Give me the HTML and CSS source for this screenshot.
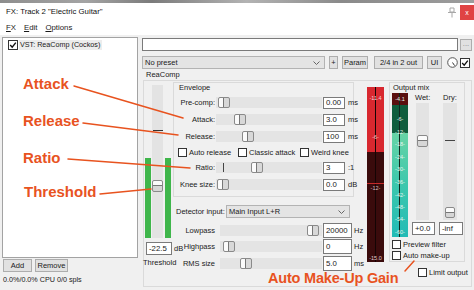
FILE: index.html
```html
<!DOCTYPE html>
<html>
<head>
<meta charset="utf-8">
<title>FX: Track 2</title>
<link rel="stylesheet" href="styles.css">
</head>
<body>
<div class="strip"></div>
<div class="titlebar">
  <span class="title">FX: Track 2 "Electric Guitar"</span>
  <svg class="pin" width="10" height="11" viewBox="0 0 10 11"><path d="M3 1h4v4H3z" fill="none" stroke="#a8a8a8"/><path d="M1 5.5h8M5 5.5v5" stroke="#a8a8a8"/></svg>
  <span class="close">x</span>
</div>
<div class="menubar"><span><u>F</u>X</span><span><u>E</u>dit</span><span><u>O</u>ptions</span></div>
<div class="main">
  <div class="left">
    <div class="list">
      <div class="item">
        <svg width="10" height="10" viewBox="0 0 10 10"><rect x="0.5" y="0.5" width="9" height="9" fill="#fff" stroke="#333"/><path d="M2.2 5 L4.2 7.2 L7.8 2.6" fill="none" stroke="#111" stroke-width="1.4"/></svg>
        <span class="itemtext">VST: ReaComp (Cockos)</span>
      </div>
    </div>
    <div class="btns"><span class="btn add">Add</span><span class="btn remove">Remove</span></div>
    <div class="cpu">0.0%/0.0% CPU 0/0 spls</div>
  </div>
  <div class="right">
    <div class="row1"><div class="field"></div><div class="btn dots">...</div></div>
    <div class="row2">
      <div class="dd preset"><span>No preset</span><svg width="7" height="4" viewBox="0 0 7 4"><path d="M0.5 0.5 L3.5 3.5 L6.5 0.5" fill="none" stroke="#666"/></svg></div>
      <span class="btn plus">+</span>
      <span class="btn param">Param</span>
      <span class="btn io">2/4 in 2 out</span>
      <span class="btn uib">UI</span>
      <svg class="knob" width="11" height="11" viewBox="0 0 11 11"><circle cx="5.5" cy="5.5" r="4.8" fill="#fff" stroke="#555"/><path d="M5.5 5.5 L7.6 8.6" stroke="#333"/></svg>
      <svg class="topcb" width="10" height="10" viewBox="0 0 10 10"><rect x="0.5" y="0.5" width="9" height="9" fill="#fff" stroke="#333"/><path d="M2.2 5 L4.2 7.2 L7.8 2.6" fill="none" stroke="#111" stroke-width="1.3"/></svg>
    </div>
    <div class="plugname">ReaComp</div>
    <div class="panel">
      <div class="thresh">
        <div class="vs">
          <span class="gbar"></span>
          <div class="vtrack thr"><span class="tick thr-tick"></span><span class="vthumb thr-thumb"></span></div>
          <span class="gbar gbar-r"></span>
        </div>
        <div class="tval"><span class="val tv">-22.5</span><span class="unit">dB</span></div>
        <div class="tlabel">Threshold</div>
      </div>
      <div class="mid">
        <div class="env">
          <div class="env-title">Envelope</div>
          <div class="srow"><span class="lbl">Pre-comp:</span><div class="htrack"><span class="hthumb p-pre"></span></div><span class="val">0.00</span><span class="unit">ms</span></div>
          <div class="srow"><span class="lbl">Attack:</span><div class="htrack"><span class="hthumb p-att"></span></div><span class="val">3.0</span><span class="unit">ms</span></div>
          <div class="srow"><span class="lbl">Release:</span><div class="htrack"><span class="hthumb p-rel"></span></div><span class="val">100</span><span class="unit">ms</span></div>
          <div class="cbrow">
            <span class="cbi w1"><span class="cb"></span>Auto release</span>
            <span class="cbi w2"><span class="cb"></span>Classic attack</span>
            <span class="cbi"><span class="cb"></span>Weird knee</span>
          </div>
          <div class="srow"><span class="lbl">Ratio:</span><div class="htrack"><span class="rtick"></span><span class="hthumb p-rat"></span></div><span class="val">3</span><span class="unit">:1</span></div>
          <div class="srow"><span class="lbl">Knee size:</span><div class="htrack"><span class="hthumb p-knee"></span></div><span class="val">0.0</span><span class="unit">dB</span></div>
        </div>
        <div class="det"><span class="lbl2">Detector input:</span><div class="dd detdd"><span>Main Input L+R</span><svg width="7" height="4" viewBox="0 0 7 4"><path d="M0.5 0.5 L3.5 3.5 L6.5 0.5" fill="none" stroke="#666"/></svg></div></div>
        <div class="frow first"><span class="lbl">Lowpass</span><div class="htrack"><span class="hthumb p-lp"></span></div><span class="val">20000</span><span class="unit">Hz</span></div>
        <div class="frow"><span class="lbl">Highpass</span><div class="htrack"><span class="hthumb p-hp"></span></div><span class="val">0</span><span class="unit">Hz</span></div>
        <div class="frow rms"><span class="lbl">RMS size</span><div class="htrack"><span class="hthumb p-rms"></span></div><span class="val">5.0</span><span class="unit">ms</span></div>
      </div>
      <div class="meter-in">
        <div class="mi-red"></div>
        <div class="mi-dark"></div>
        <span class="vline"></span>
        <span class="thr-line"></span>
        <span class="ml mi-l1">-11.4</span>
        <span class="ml mi-l2">-6-</span>
        <span class="ml mi-l3">-12-</span>
        <span class="ml mi-l4">-15.0</span>
      </div>
      <div class="outcol">
        <div class="outgrp">
          <div class="outlbl">Output mix</div>
          <div class="outbody">
            <div class="mo">
              <div class="mo-peak"></div>
              <div class="mo-dg"></div>
              <div class="mo-teal"></div>
              <span class="vline mo-line"></span>
              <span class="ml o0">-4.1</span>
              <span class="ml o1">-6-</span>
              <span class="ml o2">-12-</span>
              <span class="ml o3">-18-</span>
              <span class="ml o4">-24-</span>
              <span class="ml o5">-30-</span>
              <span class="ml o6">-36-</span>
              <span class="ml o7">-42-</span>
              <span class="ml o8">-48-</span>
              <span class="ml o9">-54-</span>
              <span class="ml o10">-60-</span>
            </div>
            <div class="wd wet">
              <span class="wl">Wet:</span>
              <div class="vtrack wtrack"><span class="vthumb wet-thumb"></span></div>
              <span class="val wv">+0.0</span>
            </div>
            <div class="wd dry">
              <span class="wl">Dry:</span>
              <div class="vtrack dtrack"><span class="tick dry-tick"></span><span class="vthumb dry-thumb"></span></div>
              <span class="val dv">-inf</span>
            </div>
          </div>
          <div class="ocb"><span class="cb"></span>Preview filter</div>
          <div class="ocb"><span class="cb"></span>Auto make-up</div>
        </div>
        <div class="ocb limit"><span class="cb"></span>Limit output</div>
      </div>
    </div>
  </div>
</div>

<svg class="annot-lines" width="474" height="290" viewBox="0 0 474 290">
  <g stroke="#e8531f" stroke-width="1.5" fill="none" stroke-linecap="round">
    <path d="M74 86 L183 118"/>
    <path d="M83 123 L178 135"/>
    <path d="M68 159 L190 168"/>
    <path d="M100 194 L151 189"/>
    <path d="M405 271 L414 261"/>
  </g>
</svg>
<div class="ann a-attack">Attack</div>
<div class="ann a-release">Release</div>
<div class="ann a-ratio">Ratio</div>
<div class="ann a-thresh">Threshold</div>
<div class="ann a-auto">Auto Make-Up Gain</div>
</body>
</html>
```

FILE: styles.css
```css
* { box-sizing: border-box; }
body {
  margin: 0;
  width: 474px;
  height: 290px;
  overflow: hidden;
  position: relative;
  background: #f0f0f0;
  font-family: "Liberation Sans", Arial, sans-serif;
  font-size: 7.5px;
  color: #1a1a1a;
}
.strip {
  height: 3px;
  background: linear-gradient(90deg, #8d8d8d 0, #a4a4a4 18%, #7b7b7b 32%, #b3b3b3 52%, #8a8a8a 72%, #9d9d9d 100%);
}
.titlebar {
  height: 17px;
  background: #fff;
  display: flex;
  align-items: flex-start;
}
.title {
  flex: 1;
  font-size: 7.8px;
  line-height: 10px;
  margin: 4px 0 0 6px;
  color: #111;
}
.pin { margin: 4px 3px 0 0; }
.close {
  width: 14px;
  height: 15px;
  margin-top: 2px;
  background: #e04343;
  color: #fff;
  font-size: 7px;
  display: flex;
  align-items: center;
  justify-content: center;
}
.menubar {
  height: 15px;
  background: #fff;
  display: flex;
  align-items: center;
  gap: 8px;
  padding-left: 6px;
  font-size: 7.8px;
}
.main { display: flex; height: 255px; }
.left {
  width: 141px;
  flex: none;
  padding: 2px 0 0 2px;
  display: flex;
  flex-direction: column;
}
.list {
  width: 136px;
  height: 221px;
  border: 1px solid #a3a3a3;
  background: #fff;
  padding: 2px 0 0 5px;
}
.item { display: flex; align-items: center; height: 10px; gap: 1px; }
.itemtext { background: #ededed; padding: 0 2px 0 1px; line-height: 10px; font-size: 7.2px; }
.btns { display: flex; gap: 3px; margin-top: 1px; padding-left: 1px; }
.btn {
  height: 13px;
  background: #e1e1e1;
  border: 1px solid #adadad;
  display: flex;
  align-items: center;
  justify-content: center;
  flex: none;
}
.add { width: 29px; }
.remove { width: 33px; }
.cpu { margin-top: 3px; height: 10px; line-height: 10px; padding-left: 1px; font-size: 7.2px; }
.right { flex: 1; }
.row1 { display: flex; margin-top: 3px; height: 13px; }
.field { width: 316px; height: 13px; margin-left: 1px; border: 1px solid #7a7a7a; background: #fff; }
.dots { width: 12px; height: 12px; margin: 1px 0 0 2px; color: #888; align-items: flex-end; padding-bottom: 2px; }
.row2 { display: flex; align-items: center; margin-top: 5px; height: 13px; }
.dd {
  height: 13px;
  background: #e4e4e4;
  border: 1px solid #b3b3b3;
  display: flex;
  align-items: center;
  justify-content: space-between;
  padding: 0 4px 0 2px;
  flex: none;
}
.preset { width: 183px; margin-left: 1px; }
.plus { width: 9px; margin-left: 4px; }
.param { width: 26px; margin-left: 4px; }
.io { width: 49px; margin-left: 6px; }
.uib { width: 15px; margin-left: 4px; }
.knob { margin-left: 5px; flex: none; }
.topcb { margin-left: 2px; flex: none; }
.plugname { margin-top: 1px; height: 10px; line-height: 10px; padding-left: 5px; }
.panel {
  margin-left: 2px;
  width: 329px;
  height: 207px;
  border: 1px solid #dadada;
  display: flex;
  align-items: flex-start;
}
.thresh { width: 29px; flex: none; display: flex; flex-direction: column; }
.vs { margin-top: 4px; height: 153px; display: flex; align-items: flex-end; padding-left: 1px; }
.gbar { width: 6px; height: 80px; background: #3fb64b; flex: none; }
.gbar-r { margin-left: 2px; }
.vtrack { background: #e3e3e3; position: relative; flex: none; }
.thr { width: 11px; height: 153px; margin-left: 1px; }
.tick { position: absolute; left: 1px; width: 10px; height: 1px; background: #333; }
.thr-tick { top: 45px; }
.vthumb {
  position: absolute;
  left: 0;
  width: 11px;
  height: 12px;
  border: 1px solid #8a8a8a;
  border-radius: 2px;
  background: linear-gradient(180deg, #fbfbfb 0 42%, #777 42% 54%, #d6d6d6 54%);
}
.thr-thumb { top: 95px; width: 11px; }
.tval { margin-top: 4px; display: flex; align-items: center; white-space: nowrap; }
.val {
  background: #fff;
  border: 1px solid #7a7a7a;
  padding-left: 2px;
  display: flex;
  align-items: center;
  flex: none;
  font-size: 7.8px;
}
.tv { margin-left: 2px; width: 26px; height: 13px; }
.unit { margin-left: 2px; white-space: nowrap; }
.tlabel { margin-top: 3px; margin-left: -1px; height: 10px; line-height: 10px; white-space: nowrap; }
.mid { width: 189px; flex: none; display: flex; flex-direction: column; }
.env {
  margin-top: 1px;
  width: 181px;
  height: 115px;
  border: 1px solid #dadada;
}
.env-title { height: 11px; line-height: 10px; padding-left: 5px; }
.srow { display: flex; align-items: center; height: 17px; }
.lbl { width: 41px; text-align: right; flex: none; white-space: nowrap; }
.htrack { width: 106px; height: 11px; margin-left: 1px; background: #e4e4e4; position: relative; flex: none; }
.env .val { width: 22px; height: 12px; margin-left: 1px; }
.env .unit { margin-left: 3px; }
.hthumb {
  position: absolute;
  top: 0;
  width: 12px;
  height: 11px;
  border: 1px solid #8a8a8a;
  border-radius: 2px;
  background: linear-gradient(90deg, #fbfbfb 0 42%, #777 42% 54%, #d8d8d8 54%);
}
.p-pre { left: 2px; }
.p-att { left: 18px; }
.p-rel { left: 26px; }
.p-rat { left: 35px; }
.p-knee { left: 1px; }
.rtick { position: absolute; left: 7px; top: 1px; width: 1px; height: 9px; background: #444; }
.cbrow { display: flex; align-items: center; height: 14px; padding-left: 4px; }
.cbi { display: flex; align-items: center; gap: 2px; white-space: nowrap; flex: none; }
.w1 { width: 60px; }
.w2 { width: 62px; }
.cb { width: 9px; height: 9px; border: 1px solid #333; background: #fff; flex: none; }
.det { display: flex; align-items: center; height: 13px; margin-top: 8px; }
.lbl2 { margin-left: 3px; width: 50px; white-space: nowrap; flex: none; }
.detdd { width: 124px; }
.frow { display: flex; align-items: center; height: 15px; margin-top: 1px; }
.frow.first { margin-top: 5px; }
.frow.rms { margin-top: 2px; }
.frow .lbl { width: 42px; }
.frow .htrack { width: 102px; margin-left: 5px; }
.frow .val { width: 29px; height: 15px; margin-left: 1px; }
.frow .unit { margin-left: 2px; }
.p-lp { left: 87px; }
.p-hp { left: 3px; }
.p-rms { left: 20px; }
.meter-in {
  margin-left: 5px;
  margin-top: 6px;
  width: 17px;
  height: 175px;
  position: relative;
  flex: none;
  display: flex;
  flex-direction: column;
}
.mi-red { height: 65px; background: #d8282f; }
.mi-dark { flex: 1; background: #3a0b0c; }
.vline { position: absolute; left: 8px; top: 0; bottom: 0; width: 1px; background: #140404; }
.thr-line { position: absolute; left: 0; right: 0; top: 96px; height: 1px; background: #c42a2a; }
.ml {
  position: absolute;
  left: -2px;
  right: -2px;
  text-align: center;
  font-size: 5.5px;
  line-height: 6px;
  color: #f2c9c9;
}
.mi-l1 { top: 8px; color: #f6d6d6; }
.mi-l2 { top: 47px; }
.mi-l3 { top: 98px; color: #d6c0c0; }
.mi-l4 { top: 168px; color: #e2d0d0; }
.outcol { margin-left: 5px; width: 76px; flex: none; display: flex; flex-direction: column; }
.outgrp { margin-top: 1px; height: 180px; border: 1px solid #dadada; }
.outlbl { height: 10px; line-height: 10px; padding-left: 3px; white-space: nowrap; }
.outbody { display: flex; height: 144px; }
.mo {
  margin-left: 2px;
  width: 16px;
  height: 144px;
  position: relative;
  display: flex;
  flex-direction: column;
  flex: none;
}
.mo-peak { height: 12px; background: #5a0f0f; }
.mo-dg { height: 28px; background: #0f5d3d; }
.mo-teal { flex: 1; background: linear-gradient(180deg, #68d4a6 0, #3cc7ad 50%, #22bbb6 100%); }
.mo-line { left: 7px; background: #10261f; }
.mo .ml { color: #e6f6ef; }
.o0 { top: 3px; color: #f3d5d5; }
.o1 { top: 23px; }
.o2 { top: 36px; }
.o3 { top: 48px; }
.o4 { top: 61px; }
.o5 { top: 73px; }
.o6 { top: 86px; }
.o7 { top: 99px; }
.o8 { top: 111px; }
.o9 { top: 123px; }
.o10 { top: 136px; }
.wd { display: flex; flex-direction: column; margin-left: 4px; flex: none; }
.wet { width: 23px; }
.dry { width: 24px; }
.wl { height: 10px; line-height: 10px; padding-left: 3px; }
.dry .wl { padding-left: 4px; }
.wtrack { margin-left: 4px; width: 13px; height: 117px; }
.dtrack { margin-left: 4px; width: 14px; height: 117px; }
.wet-thumb { top: 32px; left: 1px; }
.dry-tick { top: 37px; left: 2px; width: 10px; background: #444; }
.dry-thumb { top: 104px; left: 2px; width: 10px; height: 11px; }
.wv { margin-top: 2px; width: 23px; height: 13px; }
.dv { margin-top: 2px; width: 24px; height: 13px; }
.ocb { display: flex; align-items: center; gap: 2px; height: 11px; padding-left: 2px; white-space: nowrap; }
.outbody + .ocb { margin-top: 2px; }
.limit { margin-top: 5px; padding-left: 29px; }
.annot-lines { position: absolute; left: 0; top: 0; pointer-events: none; }
.ann {
  position: absolute;
  color: #e8531f;
  font-weight: bold;
  font-size: 15px;
  line-height: 15px;
  white-space: nowrap;
}
.a-attack { left: 23px; top: 76px; }
.a-release { left: 23px; top: 113px; }
.a-ratio { left: 23px; top: 150px; }
.a-thresh { left: 24px; top: 184px; }
.a-auto { left: 268px; top: 271px; font-size: 14.5px; letter-spacing: -0.2px; }
```
